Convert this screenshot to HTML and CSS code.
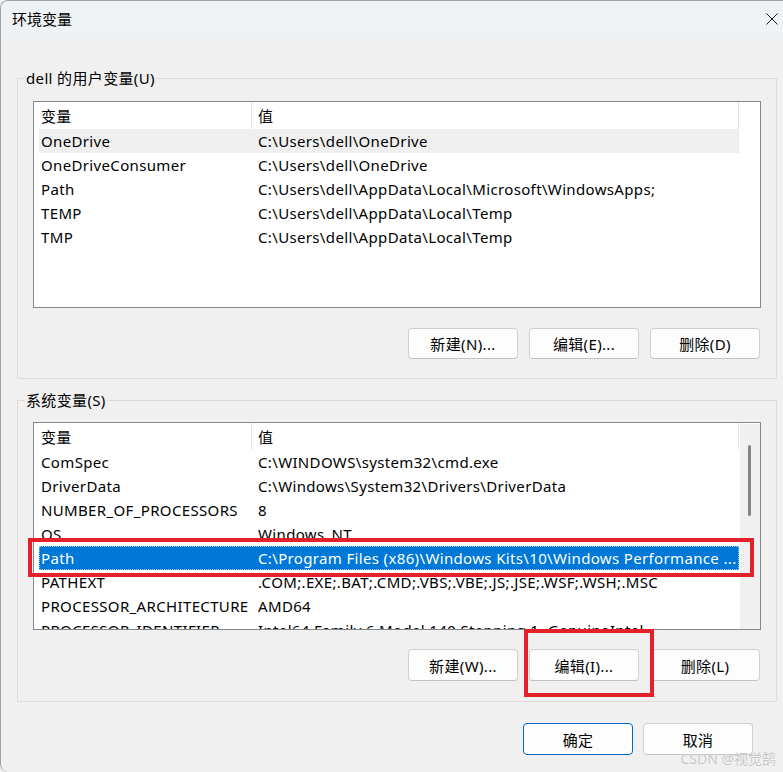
FILE: index.html
```html
<!DOCTYPE html>
<html>
<head>
    <meta charset="utf-8">
    <title>环境变量</title>
    <link rel="stylesheet" href="styles.css">
</head>
<body>
    <div class="window">
        <div class="titlebar">
            <span class="title">环境变量</span>
            <svg class="close" width="12" height="12" viewBox="0 0 12 12">
                <path d="M0.5 0.5 L11.5 11.5 M11.5 0.5 L0.5 11.5" />
            </svg>
        </div>

        <div class="content">
            <fieldset class="group user-group">
                <legend>dell 的用户变量(U)</legend>
                <div class="list user-list">
                    <div class="table">
                        <div class="head">
                            <div class="cell name">变量</div>
                            <div class="cell value">值</div>
                        </div>
                        <div class="row hover">
                            <div class="cell name">OneDrive</div>
                            <div class="cell value">C:\Users\dell\OneDrive</div>
                        </div>
                        <div class="row">
                            <div class="cell name">OneDriveConsumer</div>
                            <div class="cell value">C:\Users\dell\OneDrive</div>
                        </div>
                        <div class="row">
                            <div class="cell name">Path</div>
                            <div class="cell value">C:\Users\dell\AppData\Local\Microsoft\WindowsApps;</div>
                        </div>
                        <div class="row">
                            <div class="cell name">TEMP</div>
                            <div class="cell value">C:\Users\dell\AppData\Local\Temp</div>
                        </div>
                        <div class="row">
                            <div class="cell name">TMP</div>
                            <div class="cell value">C:\Users\dell\AppData\Local\Temp</div>
                        </div>
                    </div>
                </div>
                <div class="buttons">
                    <button class="btn">新建(N)...</button>
                    <button class="btn">编辑(E)...</button>
                    <button class="btn">删除(D)</button>
                </div>
            </fieldset>

            <fieldset class="group system-group">
                <legend>系统变量(S)</legend>
                <div class="list system-list">
                    <div class="table">
                        <div class="head">
                            <div class="cell name">变量</div>
                            <div class="cell value">值</div>
                        </div>
                        <div class="row">
                            <div class="cell name">ComSpec</div>
                            <div class="cell value">C:\WINDOWS\system32\cmd.exe</div>
                        </div>
                        <div class="row">
                            <div class="cell name">DriverData</div>
                            <div class="cell value">C:\Windows\System32\Drivers\DriverData</div>
                        </div>
                        <div class="row">
                            <div class="cell name">NUMBER_OF_PROCESSORS</div>
                            <div class="cell value">8</div>
                        </div>
                        <div class="row">
                            <div class="cell name">OS</div>
                            <div class="cell value">Windows_NT</div>
                        </div>
                        <div class="row selected">
                            <div class="cell name">Path</div>
                            <div class="cell value">C:\Program Files (x86)\Windows Kits\10\Windows Performance ...</div>
                        </div>
                        <div class="row">
                            <div class="cell name">PATHEXT</div>
                            <div class="cell value">.COM;.EXE;.BAT;.CMD;.VBS;.VBE;.JS;.JSE;.WSF;.WSH;.MSC</div>
                        </div>
                        <div class="row">
                            <div class="cell name">PROCESSOR_ARCHITECTURE</div>
                            <div class="cell value">AMD64</div>
                        </div>
                        <div class="row">
                            <div class="cell name">PROCESSOR_IDENTIFIER</div>
                            <div class="cell value">Intel64 Family 6 Model 140 Stepping 1, GenuineIntel</div>
                        </div>
                    </div>
                    <div class="scrollbar">
                        <div class="thumb"></div>
                    </div>
                </div>
                <div class="buttons">
                    <button class="btn">新建(W)...</button>
                    <button class="btn">编辑(I)...</button>
                    <button class="btn">删除(L)</button>
                </div>
            </fieldset>

            <div class="dialog-buttons">
                <button class="btn btn-default">确定</button>
                <button class="btn">取消</button>
            </div>
        </div>

        <!-- red annotation boxes drawn over the screenshot -->
        <div class="mark mark-path"></div>
        <div class="mark mark-edit"></div>

        <div class="watermark">CSDN @视觉鹄</div>
    </div>
</body>
</html>
```

FILE: styles.css
```css
body {
    margin: 0;
    padding: 0;
    background: #f0f0f0;
    font-family: "Noto Sans", "Noto Sans CJK SC", sans-serif;
    font-size: 15px;
    letter-spacing: 0.35px;
    color: #000;
    overflow: hidden;
}

.window {
    position: relative;
    height: 772px;
    box-sizing: border-box;
    border-left: 1px solid #a3a3a3;
    border-top: 1px solid #a3a3a3;
    border-radius: 8px 0 0 8px;
    background: #f0f0f0;
    overflow: hidden;
}

.titlebar {
    height: 36px;
    display: flex;
    align-items: center;
    justify-content: space-between;
    padding: 0 5px 0 11px;
    background: #eef2f5;
}

.title {
    font-size: 15px;
    letter-spacing: 0;
    margin-top: -1px;
}

.close {
    margin-top: -1px;
}

.close path {
    stroke: #1a1a1a;
    stroke-width: 1;
    fill: none;
}

.content {
    padding: 31px 6px 0 16px;
}

.group {
    margin: 0;
    padding: 13px 15px 19px 15px;
    border: 1px solid #dcdcdc;
    min-width: 0;
}

.group legend {
    font-size: 15px;
    line-height: 20px;
    padding: 0 1px;
    margin-left: -8px;
}

.system-group {
    margin-top: 11px;
    padding-top: 12px;
    padding-bottom: 20px;
}

.list {
    display: flex;
    border: 1px solid #828790;
    background: #fff;
    overflow: hidden;
}

.user-list {
    height: 205px;
}

.system-list {
    height: 206px;
}

.table {
    flex: 1;
}

.head,
.row {
    display: flex;
    margin-left: 5px;
    width: 700px;
}

.head {
    height: 27px;
    line-height: 28px;
}

.head .cell {
    border-right: 1px solid #e5e5e5;
    box-sizing: border-box;
}

.row {
    height: 24px;
    line-height: 24px;
}

.cell {
    white-space: nowrap;
    overflow: hidden;
}

.name {
    width: 213px;
    padding-left: 2px;
    box-sizing: border-box;
}

.value {
    width: 487px;
    padding-left: 6px;
    box-sizing: border-box;
}

.row.hover {
    background: #efefef;
}

.row.selected {
    background: #0078d7;
    color: #fff;
    outline: 1px dotted #9cc8ef;
    outline-offset: -1px;
}

.scrollbar {
    width: 20px;
    margin-top: 1px;
    margin-left: 1px;
    background: #f0f0f0;
}

.thumb {
    width: 3px;
    height: 71px;
    margin: 21px 0 0 8px;
    border-radius: 2px;
    background: #858585;
}

.buttons {
    display: flex;
    justify-content: flex-end;
    gap: 11px;
    margin-top: 20px;
    padding-right: 1px;
}

.user-group .buttons .btn {
    height: 31px;
}

.system-group .buttons {
    margin-top: 19px;
}

.btn {
    width: 110px;
    height: 32px;
    padding: 0;
    font-family: "Noto Sans", "Noto Sans CJK SC", sans-serif;
    font-size: 15px;
    letter-spacing: 0.35px;
    color: #000;
    background: #fdfdfd;
    border: 1px solid #d0d0d0;
    border-bottom-color: #c2c2c2;
    border-radius: 4px;
}

.dialog-buttons {
    display: flex;
    justify-content: flex-end;
    gap: 10px;
    margin-top: 21px;
    padding-right: 24px;
}

.btn-default {
    border: 1px solid #0067c0;
}

.mark {
    position: absolute;
    box-sizing: border-box;
    border: 4px solid #e3212b;
}

.mark-path {
    left: 27px;
    top: 537px;
    width: 726px;
    height: 39px;
}

.mark-edit {
    left: 523px;
    top: 628px;
    width: 130px;
    height: 68px;
}

.watermark {
    position: absolute;
    right: 7px;
    bottom: 4px;
    font-size: 14px;
    letter-spacing: 0;
    color: #c6c6c6;
    text-shadow: 0 0 1px #fff;
}
```
